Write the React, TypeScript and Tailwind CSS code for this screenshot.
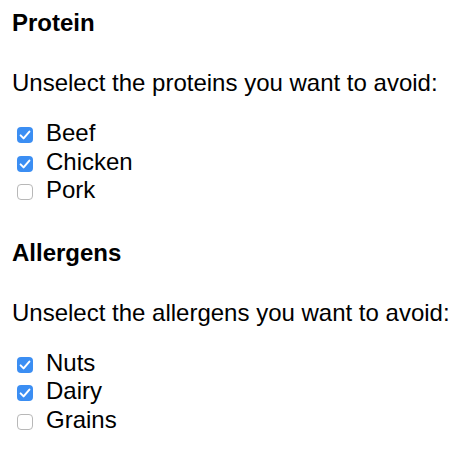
import { useState } from 'react'

type Option = { name: string; checked: boolean }

function Checkbox({ checked }: { checked: boolean }) {
  return (
    <span
      role="checkbox"
      aria-checked={checked}
      className={`mt-[8px] block w-[16px] h-[16px] min-w-[16px] shrink-0 rounded-[4px] ${
        checked ? 'bg-[#3b8ef3]' : 'bg-white border border-[#b8b8b8]'
      }`}
    >
      {checked && (
        <svg width="16" height="16" viewBox="0 0 16 16" fill="none" className="block">
          <path d="M3.6 8.4 L6.6 11.4 L12.4 4.6" stroke="white" strokeWidth="2" strokeLinecap="round" strokeLinejoin="round" />
        </svg>
      )}
    </span>
  )
}

function Section({ title, label, initial }: { title: string; label: string; initial: Option[] }) {
  const [options, setOptions] = useState(initial)

  const toggle = (i: number) => {
    setOptions(options.map((o, idx) => (idx === i ? { ...o, checked: !o.checked } : o)))
  }

  return (
    <div>
      <h2 className="font-bold leading-[28px] mb-[32px]">{title}</h2>
      <p className="leading-[28px] mb-[22px]">{label}</p>
      <div>
        {options.map((o, i) => (
          <div key={o.name} className="flex items-start gap-[13px] pl-[5px] leading-[28.5px] cursor-pointer" onClick={() => toggle(i)}>
            <Checkbox checked={o.checked} />
            <span>{o.name}</span>
          </div>
        ))}
      </div>
    </div>
  )
}

export default function App() {
  return (
    <div className="min-h-screen bg-white text-black text-[24px] px-[12px] pt-[9px] font-['Liberation_Sans',Arial,sans-serif]">
      <div className="flex flex-col gap-[34px]">
        <Section
          title="Protein"
          label="Unselect the proteins you want to avoid:"
          initial={[
            { name: 'Beef', checked: true },
            { name: 'Chicken', checked: true },
            { name: 'Pork', checked: false },
          ]}
        />
        <Section
          title="Allergens"
          label="Unselect the allergens you want to avoid:"
          initial={[
            { name: 'Nuts', checked: true },
            { name: 'Dairy', checked: true },
            { name: 'Grains', checked: false },
          ]}
        />
      </div>
    </div>
  )
}
